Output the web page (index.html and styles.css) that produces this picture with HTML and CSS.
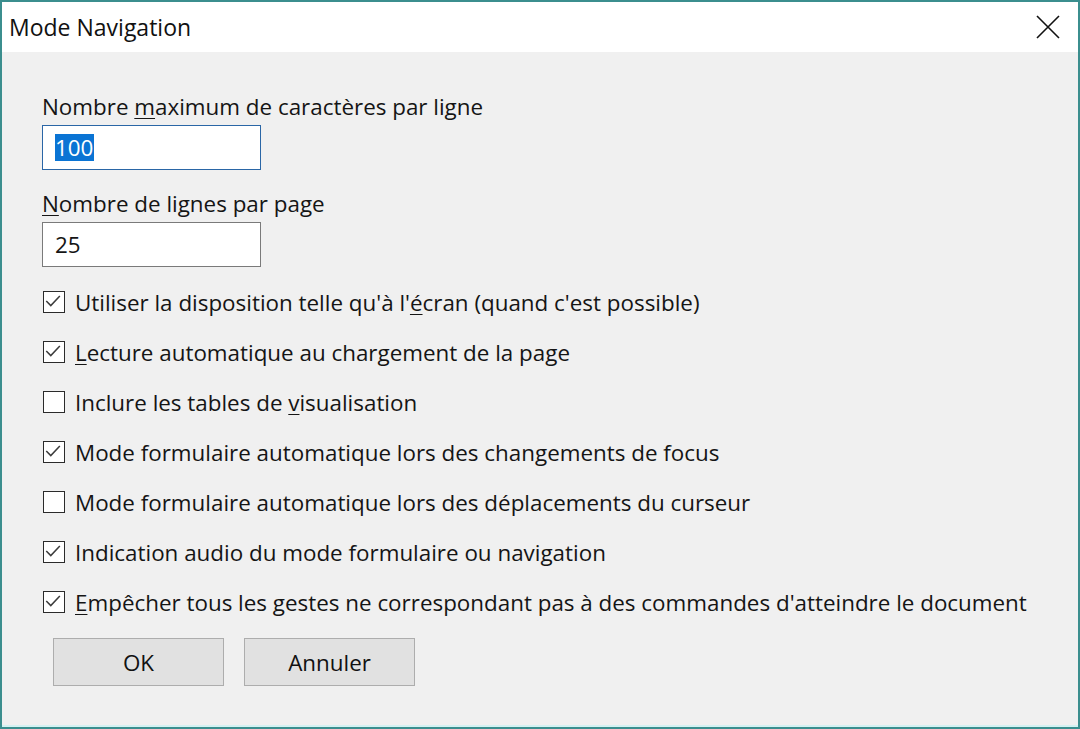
FILE: index.html
```html
<!DOCTYPE html>
<html lang="fr">
<head>
<meta charset="utf-8">
<title>Mode Navigation</title>
<link rel="stylesheet" href="styles.css">
</head>
<body>
<div class="window">
  <div class="titlebar">
    <span class="title">Mode Navigation</span>
    <span class="close" aria-label="Fermer">
      <svg width="24" height="24" viewBox="0 0 24 24"><path d="M1 1 L23 23 M23 1 L1 23" stroke="#111" stroke-width="1.6" fill="none"/></svg>
    </span>
  </div>
  <div class="content">
    <div class="field-label">Nombre <u>m</u>aximum de caractères par ligne</div>
    <div class="input focused"><span class="sel">100</span></div>
    <div class="field-label second"><u>N</u>ombre de lignes par page</div>
    <div class="input"><span>25</span></div>
    <ul class="checks">
      <li><span class="box"><svg viewBox="0 0 21 21"><path d="M2.5 10 L7.5 15 L17.5 4.5" stroke="#3c3c3c" stroke-width="1.7" fill="none"/></svg></span><span>Utiliser la disposition telle qu'à l'<u>é</u>cran (quand c'est possible)</span></li>
      <li><span class="box"><svg viewBox="0 0 21 21"><path d="M2.5 10 L7.5 15 L17.5 4.5" stroke="#3c3c3c" stroke-width="1.7" fill="none"/></svg></span><span><u>L</u>ecture automatique au chargement de la page</span></li>
      <li><span class="box"></span><span>Inclure les tables de <u>v</u>isualisation</span></li>
      <li><span class="box"><svg viewBox="0 0 21 21"><path d="M2.5 10 L7.5 15 L17.5 4.5" stroke="#3c3c3c" stroke-width="1.7" fill="none"/></svg></span><span>Mode formulaire automatique lors des changements de focus</span></li>
      <li><span class="box"></span><span>Mode formulaire automatique lors des déplacements du curseur</span></li>
      <li><span class="box"><svg viewBox="0 0 21 21"><path d="M2.5 10 L7.5 15 L17.5 4.5" stroke="#3c3c3c" stroke-width="1.7" fill="none"/></svg></span><span>Indication audio du mode formulaire ou navigation</span></li>
      <li><span class="box"><svg viewBox="0 0 21 21"><path d="M2.5 10 L7.5 15 L17.5 4.5" stroke="#3c3c3c" stroke-width="1.7" fill="none"/></svg></span><span><u>E</u>mpêcher tous les gestes ne correspondant pas à des commandes d'atteindre le document</span></li>
    </ul>
    <div class="buttons">
      <button class="btn">OK</button>
      <button class="btn">Annuler</button>
    </div>
  </div>
</div>
</body>
</html>
```
FILE: styles.css
```css
html, body {
  margin: 0;
  padding: 0;
  background: #f0f0f0;
}
body {
  font-family: "Open Sans", "Noto Sans", sans-serif;
  font-size: 22.4px;
  color: #151515;
}
.window {
  width: 1080px;
  height: 729px;
  box-sizing: border-box;
  border: 2px solid #3b8e8e;
  background: #f0f0f0;
  display: flex;
  flex-direction: column;
  box-shadow: inset 0 -2px 0 #d4f2f2;
}
.titlebar {
  height: 50px;
  background: #fff;
  display: flex;
  align-items: center;
  justify-content: space-between;
  padding-left: 7px;
  padding-right: 18px;
}
.title {
  font-size: 23px;
  line-height: 26px;
  color: #111;
}
.close {
  display: flex;
  width: 24px;
  height: 24px;
}
.content {
  padding: 41px 0 0 40px;
}
.field-label {
  line-height: 27px;
}
.field-label.second {
  margin-top: 20px;
}
u {
  text-decoration-thickness: 1px;
  text-underline-offset: 3px;
}
.input {
  margin-top: 5px;
  width: 219px;
  height: 45px;
  box-sizing: border-box;
  border: 1px solid #7a7a7a;
  background: #fff;
  display: flex;
  align-items: center;
  padding-left: 12px;
  line-height: 27px;
}
.input.focused {
  border-color: #2a66a6;
}
.sel {
  background: #0a74d4;
  color: #fff;
  padding-right: 1px;
}
.checks {
  list-style: none;
  margin: 10px 0 0 0;
  padding: 0;
}
.checks li {
  height: 50px;
  display: flex;
  align-items: center;
  gap: 10px;
}
.box {
  width: 22px;
  height: 22px;
  box-sizing: border-box;
  border: 1.5px solid #2b2b2b;
  background: #fff;
  flex: none;
  margin-left: 1px;
  display: flex;
}
.box svg {
  width: 19px;
  height: 19px;
}
.buttons {
  margin: 11px 0 0 11px;
  display: flex;
  gap: 20px;
}
.btn {
  width: 171px;
  height: 48px;
  box-sizing: border-box;
  border: 1px solid #adadad;
  background: #e1e1e1;
  font-family: inherit;
  font-size: 22.4px;
  color: #111;
  padding: 0;
}
```
